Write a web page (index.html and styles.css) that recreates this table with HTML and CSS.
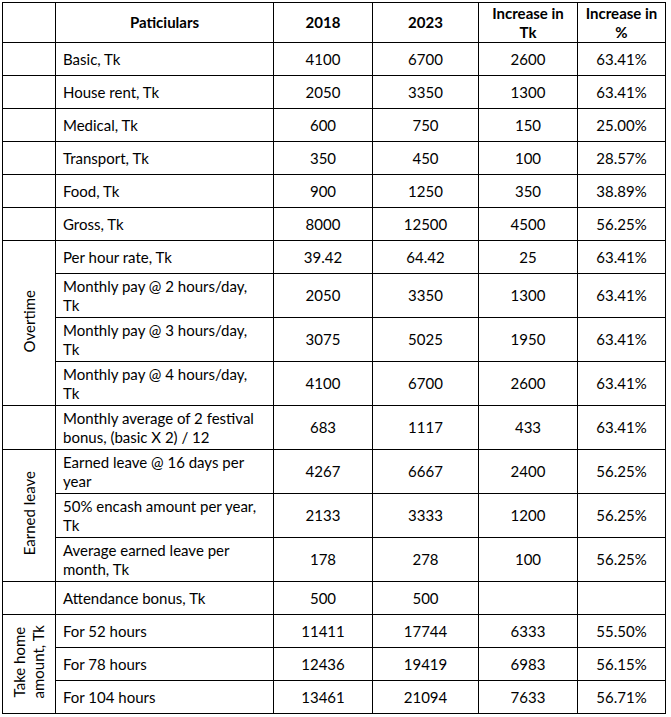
FILE: index.html
```html
<!DOCTYPE html>
<html lang="en">
<head>
    <meta charset="UTF-8">
    <title>Wage comparison 2018 - 2023</title>
    <link rel="stylesheet" href="styles.css">
</head>
<body>
    <table class="wages">
        <colgroup>
            <col class="c-group">
            <col class="c-label">
            <col class="c-y18">
            <col class="c-y23">
            <col class="c-inc">
            <col class="c-pct">
        </colgroup>
        <thead>
            <tr>
                <th></th>
                <th>Paticiulars</th>
                <th>2018</th>
                <th>2023</th>
                <th>Increase in<br>Tk</th>
                <th>Increase in<br>%</th>
            </tr>
        </thead>
        <tbody>
            <tr><td></td><td class="label">Basic, Tk</td><td>4100</td><td>6700</td><td>2600</td><td>63.41%</td></tr>
            <tr><td></td><td class="label">House rent, Tk</td><td>2050</td><td>3350</td><td>1300</td><td>63.41%</td></tr>
            <tr><td></td><td class="label">Medical, Tk</td><td>600</td><td>750</td><td>150</td><td>25.00%</td></tr>
            <tr><td></td><td class="label">Transport, Tk</td><td>350</td><td>450</td><td>100</td><td>28.57%</td></tr>
            <tr><td></td><td class="label">Food, Tk</td><td>900</td><td>1250</td><td>350</td><td>38.89%</td></tr>
            <tr><td></td><td class="label">Gross, Tk</td><td>8000</td><td>12500</td><td>4500</td><td>56.25%</td></tr>

            <tr>
                <td class="group" rowspan="4"><span>Overtime</span></td>
                <td class="label">Per hour rate, Tk</td><td>39.42</td><td>64.42</td><td>25</td><td>63.41%</td>
            </tr>
            <tr class="tall"><td class="label">Monthly pay @ 2 hours/day,<br>Tk</td><td>2050</td><td>3350</td><td>1300</td><td>63.41%</td></tr>
            <tr class="tall"><td class="label">Monthly pay @ 3 hours/day,<br>Tk</td><td>3075</td><td>5025</td><td>1950</td><td>63.41%</td></tr>
            <tr class="tall"><td class="label">Monthly pay @ 4 hours/day,<br>Tk</td><td>4100</td><td>6700</td><td>2600</td><td>63.41%</td></tr>

            <tr class="tall"><td></td><td class="label">Monthly average of 2 festival<br>bonus, (basic X 2) / 12</td><td>683</td><td>1117</td><td>433</td><td>63.41%</td></tr>

            <tr class="tall">
                <td class="group" rowspan="3"><span>Earned leave</span></td>
                <td class="label">Earned leave @ 16 days per<br>year</td><td>4267</td><td>6667</td><td>2400</td><td>56.25%</td>
            </tr>
            <tr class="tall"><td class="label">50% encash amount per year,<br>Tk</td><td>2133</td><td>3333</td><td>1200</td><td>56.25%</td></tr>
            <tr class="tall"><td class="label">Average earned leave per<br>month, Tk</td><td>178</td><td>278</td><td>100</td><td>56.25%</td></tr>

            <tr><td></td><td class="label">Attendance bonus, Tk</td><td>500</td><td>500</td><td></td><td></td></tr>

            <tr>
                <td class="group" rowspan="3"><span>Take home<br>amount, Tk</span></td>
                <td class="label">For 52 hours</td><td>11411</td><td>17744</td><td>6333</td><td>55.50%</td>
            </tr>
            <tr><td class="label">For 78 hours</td><td>12436</td><td>19419</td><td>6983</td><td>56.15%</td></tr>
            <tr><td class="label">For 104 hours</td><td>13461</td><td>21094</td><td>7633</td><td>56.71%</td></tr>
        </tbody>
    </table>
</body>
</html>
```

FILE: styles.css
```css
body {
    margin: 0;
    background: #fff;
    font-family: Lato, "Open Sans", sans-serif;
    font-size: 15px;
    color: #000;
}

.wages {
    margin: 2px 0 0 2px;
    border-collapse: collapse;
    table-layout: fixed;
    width: 664px;
}

.c-group { width: 53px; }
.c-label { width: 218px; }
.c-y18 { width: 99px; }
.c-y23 { width: 106px; }
.c-inc { width: 99px; }
.c-pct { width: 88px; }

.wages th,
.wages td {
    border: 1px solid #000;
    text-align: center;
    vertical-align: middle;
    line-height: 19px;
    padding: 0 4px;
    height: 33px;
    box-sizing: border-box;
}

.wages th {
    font-weight: bold;
    height: 40px;
}

.wages tr.tall td {
    height: 44px;
}

.wages td.label {
    text-align: left;
    padding-left: 7px;
}

.wages td.group {
    padding: 0;
}

.group span {
    display: inline-block;
    writing-mode: vertical-rl;
    transform: rotate(180deg);
    line-height: 19px;
}
```
